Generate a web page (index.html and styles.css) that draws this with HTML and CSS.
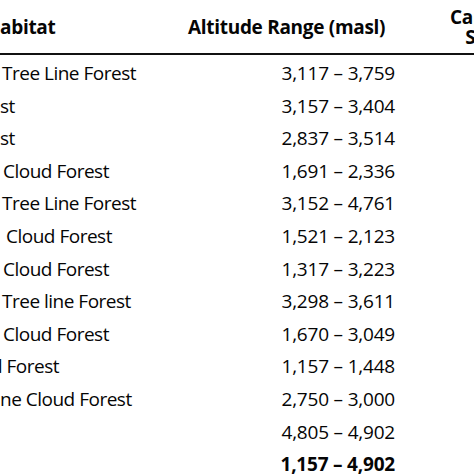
FILE: index.html
```html
<!DOCTYPE html>
<html>
<head>
<meta charset="utf-8">
<link rel="stylesheet" href="styles.css">
</head>
<body>
<table class="tbl">
  <thead>
    <tr>
      <th class="c1">abitat</th>
      <th class="c2">Altitude Range (masl)</th>
      <th class="c3">Capture<br>Sites</th>
    </tr>
  </thead>
  <tbody>
    <tr><td class="c1 i2">Tree Line Forest</td><td class="c2">3,117 – 3,759</td><td class="c3"></td></tr>
    <tr><td class="c1 i0">st</td><td class="c2">3,157 – 3,404</td><td class="c3"></td></tr>
    <tr><td class="c1 i0">st</td><td class="c2">2,837 – 3,514</td><td class="c3"></td></tr>
    <tr><td class="c1 i4">Cloud Forest</td><td class="c2">1,691 – 2,336</td><td class="c3"></td></tr>
    <tr><td class="c1 i2">Tree Line Forest</td><td class="c2">3,152 – 4,761</td><td class="c3"></td></tr>
    <tr><td class="c1 i6">Cloud Forest</td><td class="c2">1,521 – 2,123</td><td class="c3"></td></tr>
    <tr><td class="c1 i4">Cloud Forest</td><td class="c2">1,317 – 3,223</td><td class="c3"></td></tr>
    <tr><td class="c1 i2">Tree line Forest</td><td class="c2">3,298 – 3,611</td><td class="c3"></td></tr>
    <tr><td class="c1 i4">Cloud Forest</td><td class="c2">1,670 – 3,049</td><td class="c3"></td></tr>
    <tr><td class="c1 cut">d Forest</td><td class="c2">1,157 – 1,448</td><td class="c3"></td></tr>
    <tr><td class="c1 i0">ne Cloud Forest</td><td class="c2">2,750 – 3,000</td><td class="c3"></td></tr>
    <tr><td class="c1"></td><td class="c2">4,805 – 4,902</td><td class="c3"></td></tr>
    <tr class="total"><td class="c1"></td><td class="c2">1,157 – 4,902</td><td class="c3"></td></tr>
  </tbody>
</table>
</body>
</html>
```
FILE: styles.css
```css
html, body {
  margin: 0;
  padding: 0;
  background: #ffffff;
  overflow: hidden;
}
body {
  width: 474px;
  height: 474px;
  font-family: "Open Sans", "Noto Sans", sans-serif;
  color: #050505;
}
.tbl {
  border-collapse: collapse;
  table-layout: fixed;
  width: 574px;
}
.tbl th,
.tbl td {
  box-sizing: border-box;
}
.tbl th {
  font-weight: 700;
  font-size: 19px;
  letter-spacing: -0.3px;
  line-height: 20px;
  height: 54px;
  padding: 0;
  vertical-align: middle;
  border-bottom: 2px solid #111111;
}
.tbl td {
  font-size: 19px;
  font-weight: 500;
  line-height: 32.6px;
  height: 32.6px;
  padding: 0;
  white-space: nowrap;
  overflow: hidden;
}
.tbl tbody tr:first-child td {
  padding-top: 2px;
  height: 34.6px;
}
.c1 {
  width: 180px;
  text-align: left;
  letter-spacing: -0.5px;
}
.c2 {
  width: 220px;
  text-align: right;
}
.tbl th.c2 {
  text-align: left;
  padding-left: 8px;
}
.tbl td.c2 {
  padding-right: 5px;
  letter-spacing: -0.2px;
}
.c3 {
  width: 174px;
  text-align: center;
}
.tbl td.i0 { padding-left: 0; }
.tbl td.i2 { padding-left: 2px; }
.tbl td.i4 { padding-left: 3px; }
.tbl td.i6 { padding-left: 6px; }
.tbl td.cut { text-indent: -9px; }
.total td {
  font-weight: 700;
}
```
